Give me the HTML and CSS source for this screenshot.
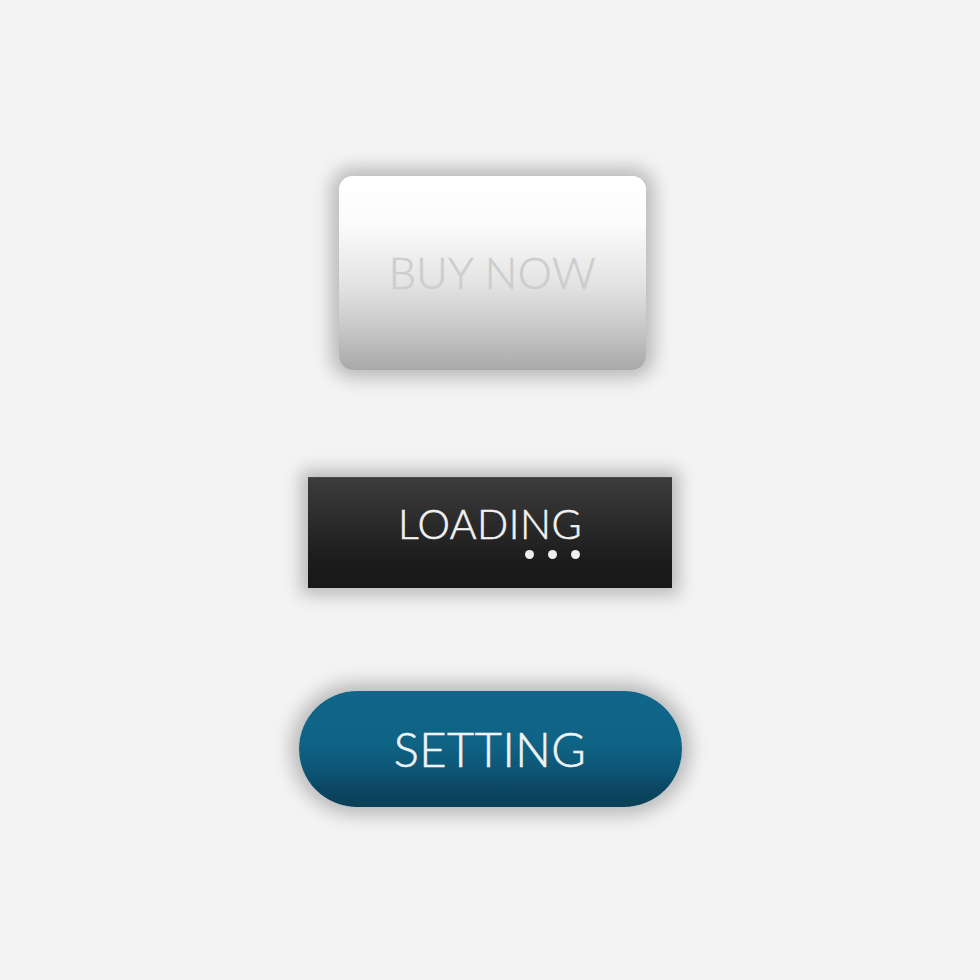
FILE: index.html
```html
<!DOCTYPE html>
<html lang="en">
<head>
<meta charset="UTF-8" />
<meta name="viewport" content="width=device-width, initial-scale=1" />
<title>Buttons</title>
<link rel="stylesheet" href="styles.css">
</head>
<body>

<main class="buttons">
  <!-- Light rounded button -->
  <button class="btn btn-light">BUY NOW</button>

  <!-- Dark square button with dots -->
  <button class="btn btn-dark">
    <span class="label">LOADING</span>
    <span class="dots"><i></i><i></i><i></i></span>
  </button>

  <!-- Blue pill button -->
  <button class="btn btn-blue">SETTING</button>
</main>

</body>
</html>
```

FILE: styles.css
```css
/* Reset */
* {
  margin: 0; padding: 0; box-sizing: border-box;
}
body {
  font-family: Lato, 'Noto Sans', sans-serif;
  background: #f2f3f2;
  width: 980px;
  height: 980px;
}
.buttons {
  display: flex;
  flex-direction: column;
  align-items: center;
  padding-top: 176px;
}
.btn {
  border: none;
  font-family: Lato, 'Noto Sans', sans-serif;
  font-weight: 300;
  -webkit-text-stroke: 0.6px currentColor;
  letter-spacing: 0.5px;
  display: flex;
  flex-direction: column;
  align-items: center;
  justify-content: center;
  cursor: pointer;
}
.btn-light {
  width: 307px;
  height: 194px;
  margin-left: 5px;
  border-radius: 14px;
  background: linear-gradient(to bottom, #ffffff 0%, #fbfbfb 25%, #e4e4e4 55%, #c9c8c9 78%, #aaa9aa 100%);
  box-shadow: 0 0 18px 8px rgba(0,0,0,0.24);
  color: #cdcdcd;
  font-size: 43px;
  padding-bottom: 2px;
}
.btn-dark {
  width: 364px;
  height: 111px;
  margin-top: 107px;
  background: linear-gradient(to bottom, #3c3c3c 0%, #2b2b2b 40%, #1c1c1c 75%, #181818 100%);
  border-top: 1px solid #4a4a4a;
  box-shadow: 0 0 16px 7px rgba(0,0,0,0.24);
  color: #f1f1f1;
  font-size: 41px;
}
.btn-dark .label {
  line-height: 1;
  margin-top: -4px;
}
.dots {
  display: flex;
  gap: 14px;
  align-self: flex-end;
  margin-right: 92px;
  margin-top: 6px;
}
.dots i {
  width: 9px;
  height: 9px;
  border-radius: 50%;
  background: #eeeeee;
}
.btn-blue {
  width: 383px;
  height: 116px;
  margin-top: 103px;
  border-radius: 58px;
  background: linear-gradient(to bottom, #10668a 0%, #0f6385 45%, #0d5575 70%, #0a4560 85%, #0a4057 100%);
  box-shadow: 0 0 18px 8px rgba(0,0,0,0.24);
  color: #eef3f5;
  font-size: 47px;
}
```
